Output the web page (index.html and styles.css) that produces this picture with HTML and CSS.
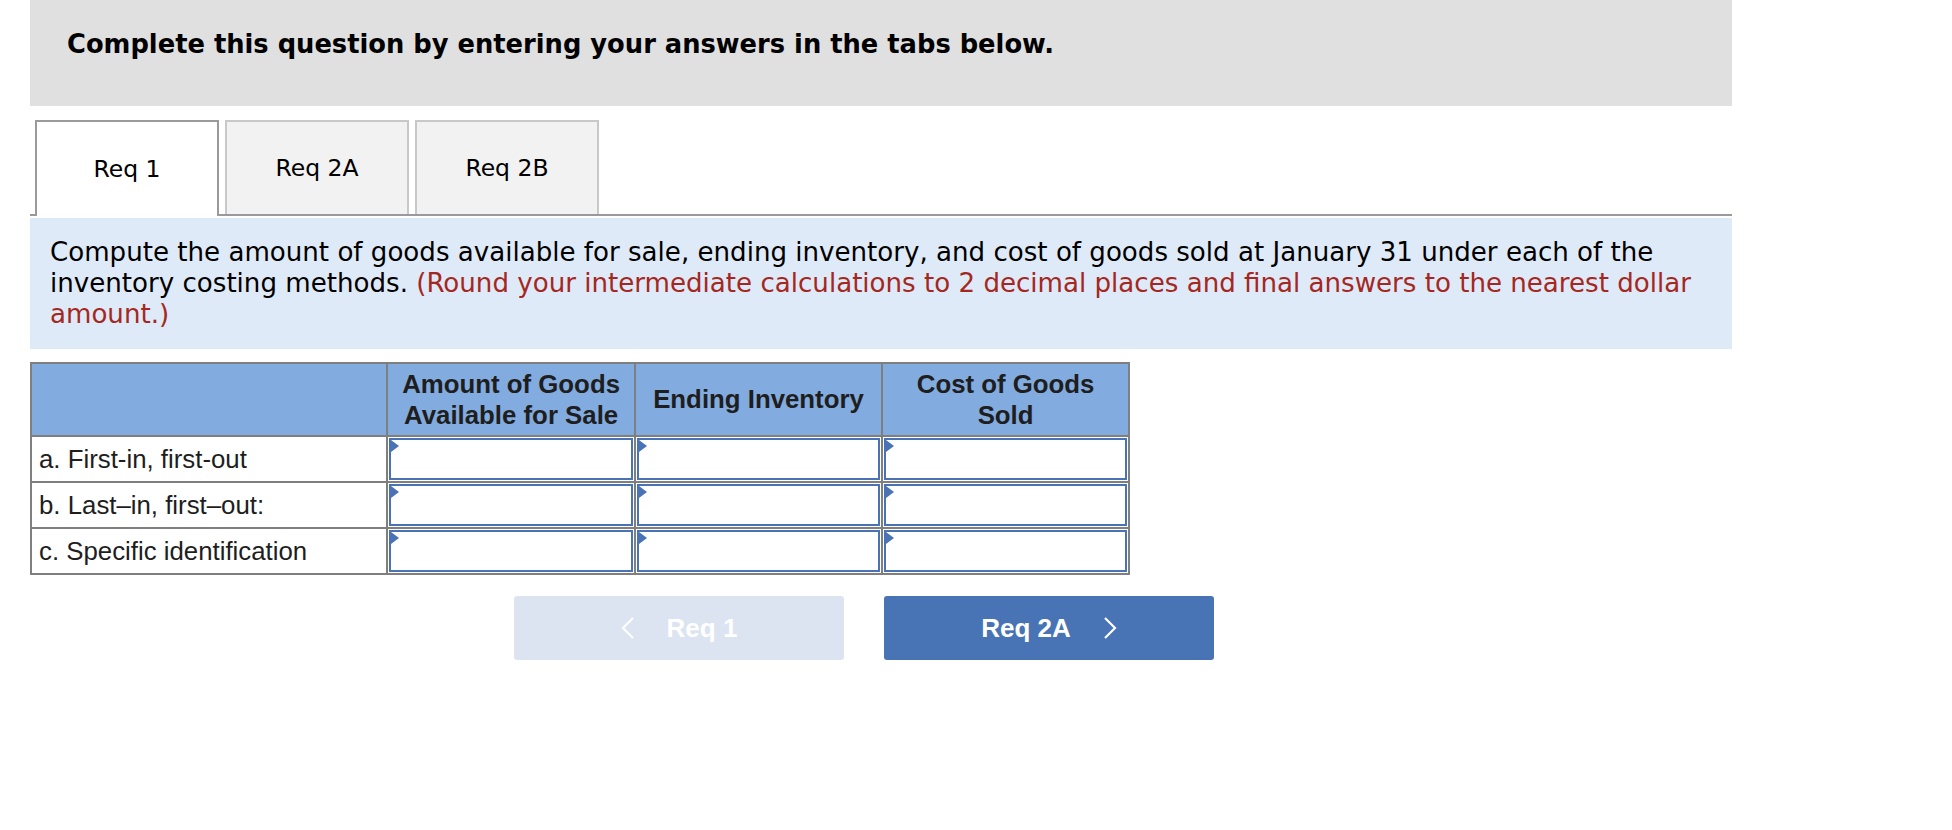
FILE: index.html
```html
<!DOCTYPE html>
<html>
<head>
<meta charset="utf-8">
<link rel="stylesheet" href="styles.css">
</head>
<body>
<div class="page">
  <div class="header">Complete this question by entering your answers in the tabs below.</div>
  <div class="tabs">
    <div class="tab active">Req 1</div>
    <div class="tab">Req 2A</div>
    <div class="tab">Req 2B</div>
  </div>
  <div class="instructions">
    Compute the amount of goods available for sale, ending inventory, and cost of goods sold at January 31 under each of the inventory costing methods. <span class="red">(Round your intermediate calculations to 2 decimal places and final answers to the nearest dollar amount.)</span>
  </div>
  <table class="grid">
    <thead>
      <tr>
        <th class="label-col"></th>
        <th>Amount of Goods<br>Available for Sale</th>
        <th>Ending Inventory</th>
        <th>Cost of Goods<br>Sold</th>
      </tr>
    </thead>
    <tbody>
      <tr>
        <td class="label">a. First-in, first-out</td>
        <td class="cell"><div class="input"><span class="tri"></span></div></td>
        <td class="cell"><div class="input"><span class="tri"></span></div></td>
        <td class="cell"><div class="input"><span class="tri"></span></div></td>
      </tr>
      <tr>
        <td class="label">b. Last–in, first–out:</td>
        <td class="cell"><div class="input"><span class="tri"></span></div></td>
        <td class="cell"><div class="input"><span class="tri"></span></div></td>
        <td class="cell"><div class="input"><span class="tri"></span></div></td>
      </tr>
      <tr>
        <td class="label">c. Specific identification</td>
        <td class="cell"><div class="input"><span class="tri"></span></div></td>
        <td class="cell"><div class="input"><span class="tri"></span></div></td>
        <td class="cell"><div class="input"><span class="tri"></span></div></td>
      </tr>
    </tbody>
  </table>
  <div class="nav">
    <div class="btn prev">
      <svg class="chev" width="14" height="22" viewBox="0 0 14 22"><polyline points="12,1 2,11 12,21" fill="none" stroke="#ffffff" stroke-width="2.2"/></svg>
      <span>Req 1</span>
    </div>
    <div class="btn next">
      <span>Req 2A</span>
      <svg class="chev" width="14" height="22" viewBox="0 0 14 22"><polyline points="2,1 12,11 2,21" fill="none" stroke="#ffffff" stroke-width="2.2"/></svg>
    </div>
  </div>
</div>
</body>
</html>
```
FILE: styles.css
```css
html, body {
  margin: 0;
  padding: 0;
  background: #ffffff;
}
.page {
  margin-left: 30px;
  width: 1702px;
}
.header {
  background: #e0e0e0;
  height: 106px;
  box-sizing: border-box;
  padding: 29px 0 0 37px;
  font-family: Verdana, "DejaVu Sans", sans-serif;
  font-weight: bold;
  font-size: 25.75px;
  color: #000;
}
.tabs {
  display: flex;
  margin-top: 14px;
  padding-left: 5px;
  gap: 6px;
  border-bottom: 2px solid #9a9a9a;
  height: 94px;
}
.tab {
  width: 184px;
  height: 94px;
  box-sizing: border-box;
  border: 2px solid #c8c8c8;
  border-bottom: none;
  background: #f2f2f2;
  display: flex;
  align-items: center;
  justify-content: center;
  font-family: Verdana, "DejaVu Sans", sans-serif;
  font-size: 23.5px;
  color: #000;
}
.tab.active {
  background: #ffffff;
  border-color: #9a9a9a;
  height: 96px;
  margin-bottom: -2px;
}
.instructions {
  margin-top: 2px;
  background: #deeaf7;
  padding: 19px 20px 19px 20px;
  font-family: Verdana, "DejaVu Sans", sans-serif;
  font-size: 26.1px;
  line-height: 31px;
  color: #000;
}
.red {
  color: #a52722;
}
.grid {
  margin-top: 13px;
  border-collapse: collapse;
  border: 2px solid #7f7f7f;
  font-family: Arial, "Liberation Sans", sans-serif;
  width: 1100px;
}
.grid th {
  background: #82abdf;
  border: 2px solid #7f7f7f;
  font-size: 25.8px;
  font-weight: bold;
  color: #1e1e1e;
  height: 71px;
  padding: 0;
  line-height: 31px;
  width: 248px;
}
.grid th.label-col {
  width: 356px;
}
.grid td {
  border: 2px solid #7f7f7f;
  padding: 0;
  height: 44px;
  box-sizing: border-box;
}
.grid td.label {
  font-size: 25.8px;
  line-height: 30px;
  color: #1e1e1e;
  padding-left: 7px;
  white-space: nowrap;
}
.grid td.cell {
  padding: 1px;
}
.input {
  position: relative;
  height: 42px;
  box-sizing: border-box;
  border: 2px solid #4a73b5;
  background: #fff;
}
.tri {
  position: absolute;
  left: 0;
  top: 0;
  width: 0;
  height: 0;
  border-top: 6px solid transparent;
  border-bottom: 6px solid transparent;
  border-left: 8px solid #4a73b5;
}
.nav {
  display: flex;
  gap: 40px;
  margin-top: 21px;
  margin-left: 484px;
}
.btn {
  width: 330px;
  height: 64px;
  border-radius: 3px;
  display: flex;
  align-items: center;
  justify-content: center;
  gap: 32px;
  font-family: Arial, "Liberation Sans", sans-serif;
  font-weight: bold;
  font-size: 26px;
  color: #fff;
}
.btn .chev {
  display: block;
}
.prev {
  background: #dbe4f0;
}
.next {
  background: #4873b4;
}
```
